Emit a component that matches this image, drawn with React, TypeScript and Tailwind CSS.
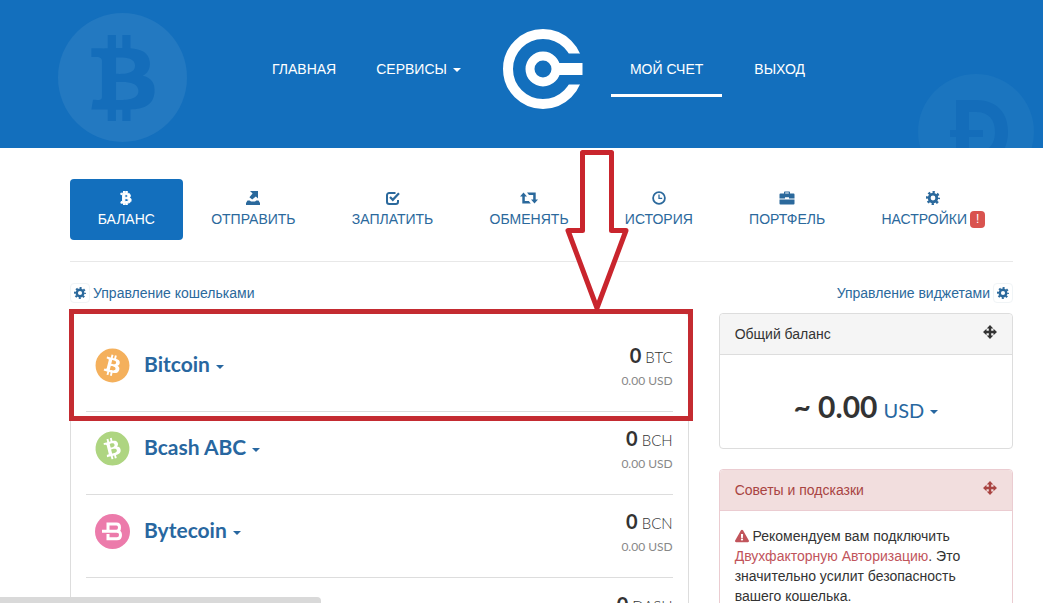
import React from 'react';
import { FaBitcoin, FaBtc, FaExclamationTriangle } from 'react-icons/fa';

const wallets = [
  { name: 'Bitcoin', code: 'BTC', icon: 'btc' },
  { name: 'Bcash ABC', code: 'BCH', icon: 'bch' },
  { name: 'Bytecoin', code: 'BCN', icon: 'bcn' },
  { name: 'Dash', code: 'DASH', icon: 'dash' },
];

const CogIcon: React.FC<{ className?: string }> = ({ className }) => (
  <svg viewBox="0 0 14 14" className={className} fill="none" stroke="currentColor">
    <circle cx="7" cy="7" r="3.8" strokeWidth="2.8" />
    <circle cx="7" cy="7" r="5.8" strokeWidth="2.4" strokeDasharray="2.28 2.28" strokeDashoffset="1.14" />
  </svg>
);

const MoveIcon: React.FC<{ className?: string }> = ({ className }) => (
  <svg viewBox="0 0 14 14" className={className} fill="currentColor">
    <path d="M7 0l3.300 3.500H8.200v2.300h2.300V3.700L14 7l-3.500 3.300V8.200H8.200v2.300h2.100L7 14l-3.300-3.500h2.100V8.200H3.500v2.100L0 7l3.500-3.300v2.100h2.300V3.500H3.700z" />
  </svg>
);

const SendIcon = () => (
  <svg viewBox="0 0 14 14" className="w-[14px] h-[14px]" fill="currentColor">
    <path d="M4 0h8v7.5L9.8 5.4 6.2 8.6 3.4 6.2 6.6 2.5z" />
    <path d="M1.5 9.5h2.2L5 10.5h4l1.3-1h2.2L14 12v2H0v-2z" />
  </svg>
);

const CheckIcon = () => (
  <svg viewBox="0 0 14 14" className="w-[14px] h-[14px]" fill="none" stroke="currentColor">
    <path d="M9.5 2H3.2A2.2 2.2 0 0 0 1 4.2v6.6A2.2 2.2 0 0 0 3.2 13h6.6a2.2 2.2 0 0 0 2.2-2.2V9" strokeWidth="2" />
    <path d="M4 6l2.8 2.8L13 2.2" strokeWidth="2.2" />
  </svg>
);

const ExchangeIcon = () => (
  <svg viewBox="0 0 18 14" className="w-[18px] h-[14px]" fill="currentColor">
    <path d="M3.5 1.5L7 5.5H4.8v4.6h4l2 2.4H2.3v-7H0z" />
    <path d="M7 1.5h8.7v7H18l-3.5 4-3.5-4h2.2V4H9z" />
  </svg>
);

const ClockIcon = () => (
  <svg viewBox="0 0 14 14" className="w-[14px] h-[14px]" fill="none" stroke="currentColor">
    <circle cx="7" cy="7" r="5.9" strokeWidth="1.8" />
    <path d="M7 3.4V7.3h3.2" strokeWidth="1.3" />
  </svg>
);

const BriefcaseIcon = () => (
  <svg viewBox="0 0 16 14" className="w-4 h-[14px]" fill="currentColor">
    <path d="M5 2.5V1.2Q5 .5 5.8.5h4.4q.8 0 .8.7v1.3h3.6q.9 0 .9.9v4H10V6.2H6v1.2H.5v-4q0-.9.9-.9H5zm1.2 0h3.6v-.9H6.2z" />
    <path d="M.5 8.500H15.500v4q0 .9-.9.9H1.400q-.9 0-.9-.9z" />
  </svg>
);

const Logo = () => (
  <svg viewBox="0 0 80 80" className="w-20 h-20" fill="none" stroke="#fff">
    <circle cx="40" cy="40" r="35" strokeWidth="10" />
    <path d="M60 24.500H80V55.500H60z" fill="#136fbd" stroke="none" />
    <circle cx="40" cy="40" r="13" strokeWidth="9" />
    <path d="M54 40H79.500" strokeWidth="12" />
  </svg>
);

const DogeMark = () => (
  <svg viewBox="0 0 116 116" className="w-[116px] h-[116px]">
    <circle cx="58" cy="58" r="58" fill="#1b75bf" />
    <path
      d="M38 26h20c20 0 32 12 32 32s-12 32-32 32H38V63h-6v-7h6zm13 12v18h14v7H51v15h7c13 0 19-8 19-20s-6-20-19-20z"
      fill="#146dba"
    />
  </svg>
);

const Caret = () => (
  <span className="inline-block ml-[6px] align-middle border-t-4 border-x-4 border-x-transparent border-t-current" />
);

const CoinIcon: React.FC<{ type: string }> = ({ type }) => {
  if (type === 'btc') return <FaBitcoin className="w-[35px] h-[35px] text-[#f4b05c]" />;
  if (type === 'bch') return <FaBitcoin className="w-[35px] h-[35px] text-[#aed581] -rotate-28" />;
  if (type === 'bcn') {
    return (
      <svg viewBox="0 0 35 35" className="w-[35px] h-[35px]" fill="none" stroke="#fff">
        <circle cx="17.5" cy="17.5" r="17.5" fill="#ec7bab" stroke="none" />
        <path d="M13 17.500V10H21.500Q24.500 10 24.500 13.500T21.500 17.300H7M13 20V24.800H22Q25.500 24.800 25.500 21T21.500 17.300" strokeWidth="3" />
      </svg>
    );
  }
  return (
    <svg viewBox="0 0 35 35" className="w-[35px] h-[35px]">
      <circle cx="17.5" cy="17.5" r="17.5" fill="#5b6066" />
      <path d="M12 11h9l3 3-2 9H10M9 17h7" fill="none" stroke="#fff" strokeWidth="3" />
    </svg>
  );
};

const tabs = [
  { label: 'БАЛАНС', icon: <FaBtc className="w-[14px] h-[14px] stroke-current stroke-[36px]" />, active: true },
  { label: 'ОТПРАВИТЬ', icon: <SendIcon /> },
  { label: 'ЗАПЛАТИТЬ', icon: <CheckIcon /> },
  { label: 'ОБМЕНЯТЬ', icon: <ExchangeIcon /> },
  { label: 'ИСТОРИЯ', icon: <ClockIcon /> },
  { label: 'ПОРТФЕЛЬ', icon: <BriefcaseIcon /> },
  { label: 'НАСТРОЙКИ', icon: <CogIcon className="w-[14px] h-[14px]" />, badge: '!' },
];

const Header = () => (
  <header className="relative h-[148px] bg-[#136fbd] overflow-hidden">
    <div className="absolute left-[58px] top-[13px] w-[129px] h-[129px] rounded-full bg-[#2379c1] flex items-center justify-center text-[#146dba]">
      <FaBtc className="w-[86px] h-[86px]" />
    </div>
    <div className="absolute right-[9px] top-[74px]">
      <DogeMark />
    </div>
    <nav className="relative flex justify-center items-center pt-[29px] pl-10 text-sm text-white">
      <a href="#" className="px-5">ГЛАВНАЯ</a>
      <a href="#" className="px-5">СЕРВИСЫ<Caret /></a>
      <a href="#" className="mx-[22px]" aria-label="Home"><Logo /></a>
      <a href="#" className="relative mx-[6px] px-[19px] py-[18px] after:absolute after:inset-x-0 after:bottom-0 after:h-[3px] after:bg-white">
        МОЙ СЧЕТ
      </a>
      <a href="#" className="px-[26px]">ВЫХОД</a>
    </nav>
  </header>
);

const WalletList = () => (
  <section className="relative min-h-[330px] border border-[#ddd] rounded px-[15px] pt-[15px]">
    {wallets.map(wallet => (
      <div key={wallet.code} className="h-[83px] flex items-start border-b border-[#ddd] pl-[9px] font-[Lato,sans-serif]">
        <div className="mt-[19px]">
          <CoinIcon type={wallet.icon} />
        </div>
        <button type="button" className="mt-[20px] ml-[14px] text-[21px] leading-[30px] font-bold text-[#2867a0]">
          {wallet.name}<Caret />
        </button>
        <div className="ml-auto mt-[12px] text-right">
          <div className="text-[15px] leading-[28px] font-light text-[#333]">
            <span className="text-xl font-bold">0</span> {wallet.code}
          </div>
          <div className="text-xs leading-5 text-[#888]">0.00 USD</div>
        </div>
      </div>
    ))}
    {/* Highlight around the first wallet */}
    <div className="absolute -left-[2px] -right-[5px] -top-[5px] h-[112px] border-[5px] border-[#c42b31]" />
  </section>
);

const App: React.FC = () => {
  return (
    <div className="relative max-h-screen overflow-hidden bg-white text-sm text-[#333] font-['Liberation_Sans',Arial,sans-serif]">
      <Header />

      <main className="pl-[70px] pr-[30px] pt-[31px]">
        <nav className="flex gap-px">
          {tabs.map(tab => (
            <a
              key={tab.label}
              href="#"
              className={`flex-auto h-[61px] pt-3 flex flex-col items-center rounded ${
                tab.active ? 'bg-[#136fbd] text-white' : 'text-[#2b699c]'
              }`}
            >
              {tab.icon}
              <span className="mt-1 leading-5 flex items-center">
                {tab.label}
                {tab.badge && (
                  <span className="ml-[3px] px-[6px] rounded-sm bg-[#d9534f] text-white text-xs leading-[17px]">{tab.badge}</span>
                )}
              </span>
            </a>
          ))}
        </nav>

        <hr className="mt-[21px] border-[#e8e8e8]" />

        <div className="mt-[21px] grid grid-cols-3 gap-x-[30px]">
          <div className="col-span-2">
            <a href="#" className="h-5 mb-[10px] flex items-center gap-[3px] text-[#2b699c]">
              <span className="w-5 h-5 flex items-center justify-center border border-[#f0f4f6] rounded-sm">
                <CogIcon className="w-3 h-3" />
              </span>
              Управление кошельками
            </a>
            <WalletList />
          </div>

          <div>
            <a href="#" className="h-5 mb-[10px] flex items-center justify-end gap-[3px] text-[#2b699c]">
              Управление виджетами
              <span className="w-5 h-5 flex items-center justify-center border border-[#f0f4f6] rounded-sm">
                <CogIcon className="w-3 h-3" />
              </span>
            </a>

            <section className="border border-[#ddd] rounded">
              <div className="h-[41px] px-[15px] flex items-center justify-between bg-[#f5f5f5] border-b border-[#ddd] rounded-t">
                <h3>Общий баланс</h3>
                <MoveIcon className="w-[14px] h-[14px] mb-1" />
              </div>
              <div className="h-[93px] pt-2 flex items-center justify-center font-[Lato,sans-serif]">
                <div className="text-3xl leading-10">
                  <span className="font-bold">~ 0.00</span>
                  <button type="button" className="ml-[6px] text-xl text-[#2867a0]">USD<Caret /></button>
                </div>
              </div>
            </section>

            <section className="mt-5 border border-[#ebccd1] rounded">
              <div className="h-[41px] px-[15px] flex items-center justify-between bg-[#f2dede] border-b border-[#ebccd1] text-[#a94442] rounded-t">
                <h3>Советы и подсказки</h3>
                <MoveIcon className="w-[14px] h-[14px] mb-1" />
              </div>
              <p className="p-[15px] leading-5">
                <FaExclamationTriangle className="inline w-[14px] h-[14px] align-[-2px] text-[#c1545b]" /> Рекомендуем вам подключить{' '}
                <a href="#" className="text-[#c1545b]">Двухфакторную Авторизацию</a>. Это значительно усилит безопасность вашего кошелька.
              </p>
            </section>
          </div>
        </div>
      </main>

      {/* Arrow pointing at the highlighted wallet */}
      <svg viewBox="0 0 64 164" className="absolute left-[565px] top-[148px] w-16 h-[164px]" fill="none" stroke="#c9252d" strokeWidth="5" strokeLinejoin="round">
        <path d="M17.5 4.5H46.5V82.5H61L32 160L3 82.5H17.5z" fill="#fff" />
      </svg>

      <div className="absolute left-0 bottom-0 w-[321px] h-[6px] rounded-tr bg-[#d9d9d9]" />
    </div>
  );
};

export default App;
